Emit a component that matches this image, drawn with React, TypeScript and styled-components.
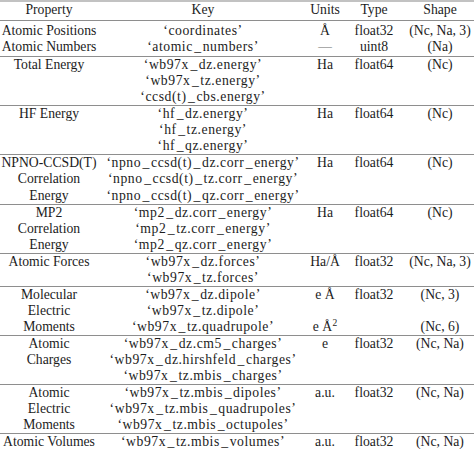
import React from "react";
import styled, { createGlobalStyle } from "styled-components";

const Global = createGlobalStyle`
  html, body { margin: 0; padding: 0; background: #ffffff; }
  body {
    font-family: "Liberation Serif", "Times New Roman", serif;
    font-size: 13.7px;
    color: #1c1c1c;
  }
`;

const Table = styled.div`
  width: 474px;
  border-top: 2px solid #c2c2c2;
`;

const Group = styled.div<{ $padTop?: number; $padBottom?: number; $last?: boolean }>`
  padding-top: ${(p) => p.$padTop ?? 0}px;
  padding-bottom: ${(p) => p.$padBottom ?? 0}px;
  border-bottom: ${(p) => (p.$last ? "none" : "1px solid #8e8e8e")};
`;

const Row = styled.div`
  display: grid;
  grid-template-columns: 98px 210px 34px 64px 68px;
  height: 16.05px;
  line-height: 16.05px;
`;

const Cell = styled.div<{ $key?: boolean }>`
  display: flex;
  justify-content: center;
  white-space: nowrap;
  min-width: 0;
  letter-spacing: ${(p) => (p.$key ? "0.55px" : "0")};
`;

const Under = styled.span`
  margin: 0 1px 0 1.5px;
`;

const Sup = styled.sup`
  font-size: 9.5px;
  line-height: 0;
  vertical-align: 5px;
  margin-left: 0.5px;
`;

const Dash = styled.span`
  color: #6a6a6a;
`;

type Line = [React.ReactNode, React.ReactNode, React.ReactNode, React.ReactNode, React.ReactNode];

function q(s: string) {
  const parts = s.split("_");
  return (
    <span>
      {"\u2018"}
      {parts.map((p, i) => (
        <React.Fragment key={i}>
          {i > 0 && <Under>_</Under>}
          {p}
        </React.Fragment>
      ))}
      {"\u2019"}
    </span>
  );
}

const header: Line = ["Property", "Key", "Units", "Type", "Shape"];

const groups: Line[][] = [
  [
    ["Atomic Positions", q("coordinates"), "Å", "float32", "(Nc, Na, 3)"],
    ["Atomic Numbers", q("atomic_numbers"), <Dash>—</Dash>, "uint8", "(Na)"],
  ],
  [
    ["Total Energy", q("wb97x_dz.energy"), "Ha", "float64", "(Nc)"],
    ["", q("wb97x_tz.energy"), "", "", ""],
    ["", q("ccsd(t)_cbs.energy"), "", "", ""],
  ],
  [
    ["HF Energy", q("hf_dz.energy"), "Ha", "float64", "(Nc)"],
    ["", q("hf_tz.energy"), "", "", ""],
    ["", q("hf_qz.energy"), "", "", ""],
  ],
  [
    ["NPNO-CCSD(T)", q("npno_ccsd(t)_dz.corr_energy"), "Ha", "float64", "(Nc)"],
    ["Correlation", q("npno_ccsd(t)_tz.corr_energy"), "", "", ""],
    ["Energy", q("npno_ccsd(t)_qz.corr_energy"), "", "", ""],
  ],
  [
    ["MP2", q("mp2_dz.corr_energy"), "Ha", "float64", "(Nc)"],
    ["Correlation", q("mp2_tz.corr_energy"), "", "", ""],
    ["Energy", q("mp2_qz.corr_energy"), "", "", ""],
  ],
  [
    ["Atomic Forces", q("wb97x_dz.forces"), "Ha/Å", "float32", "(Nc, Na, 3)"],
    ["", q("wb97x_tz.forces"), "", "", ""],
  ],
  [
    ["Molecular", q("wb97x_dz.dipole"), "e Å", "float32", "(Nc, 3)"],
    ["Electric", q("wb97x_tz.dipole"), "", "", ""],
    [
      "Moments",
      q("wb97x_tz.quadrupole"),
      <span>
        e Å<Sup>2</Sup>
      </span>,
      "",
      "(Nc, 6)",
    ],
  ],
  [
    ["Atomic", q("wb97x_dz.cm5_charges"), "e", "float32", "(Nc, Na)"],
    ["Charges", q("wb97x_dz.hirshfeld_charges"), "", "", ""],
    ["", q("wb97x_tz.mbis_charges"), "", "", ""],
  ],
  [
    ["Atomic", q("wb97x_tz.mbis_dipoles"), "a.u.", "float32", "(Nc, Na)"],
    ["Electric", q("wb97x_tz.mbis_quadrupoles"), "", "", ""],
    ["Moments", q("wb97x_tz.mbis_octupoles"), "", "", ""],
  ],
  [["Atomic Volumes", q("wb97x_tz.mbis_volumes"), "a.u.", "float32", "(Nc, Na)"]],
];

function TableRow({ line, isHeader }: { line: Line; isHeader?: boolean }) {
  return (
    <Row>
      {line.map((c, i) => (
        <Cell key={i} $key={i === 1 && !isHeader}>
          {c}
        </Cell>
      ))}
    </Row>
  );
}

export default function App() {
  return (
    <>
      <Global />
      <Table>
        <Group $padBottom={2}>
          <TableRow line={header} isHeader />
        </Group>
        {groups.map((g, gi) => (
          <Group
            key={gi}
            $padTop={gi === 0 ? 2 : 0}
            $padBottom={gi === 0 ? 1 : 0}
            $last={gi === groups.length - 1}
          >
            {g.map((line, li) => (
              <TableRow key={li} line={line} />
            ))}
          </Group>
        ))}
      </Table>
    </>
  );
}
